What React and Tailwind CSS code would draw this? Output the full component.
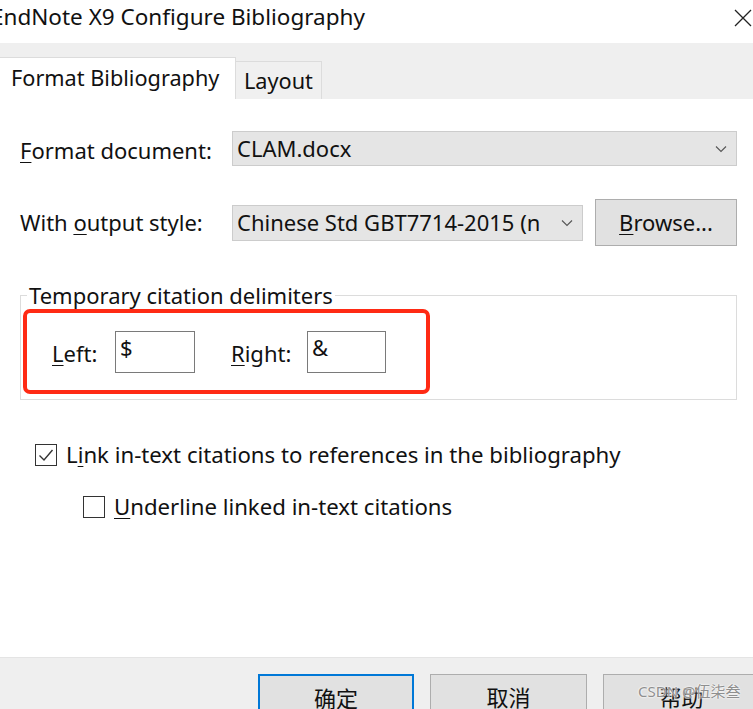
import React from 'react';

// mnemonic letter, underlined like a Windows access key
const Key = ({ children }) => <span className="underline underline-offset-[3px] decoration-1">{children}</span>;

const Chevron = () => (
  <svg width="12" height="8" viewBox="0 0 12 8" className="shrink-0">
    <polyline points="1,1.5 6,6.5 11,1.5" fill="none" stroke="#555" strokeWidth="1.1" />
  </svg>
);

const Checkbox = ({ checked }) => (
  <span className="w-[22px] h-[22px] border-[1.5px] border-[#333] bg-white flex items-center justify-center shrink-0">
    {checked && (
      <svg width="16" height="14" viewBox="0 0 16 14">
        <polyline points="1.5,7.5 6,12 14.5,2" fill="none" stroke="#333" strokeWidth="1.4" />
      </svg>
    )}
  </span>
);

const DialogButton = ({ label, primary }) => (
  <button
    className={`w-full h-[44px] flex items-start justify-center pt-[8px] text-[22px] leading-[28px] bg-[#e1e1e1] ${
      primary ? 'border-2 border-[#0078d7]' : 'border border-[#adadad]'
    }`}
  >
    {label}
  </button>
);

export default function App() {
  return (
    <div
      className="w-[753px] h-[709px] overflow-hidden relative bg-white text-[#111] flex flex-col"
      style={{ fontFamily: '"Noto Sans", "Noto Sans CJK SC", sans-serif' }}
    >
      {/* title bar */}
      <div className="h-[43px] shrink-0 flex items-start justify-between pt-[3px]">
        <span className="ml-[-9px] text-[22.5px] leading-[28px]">EndNote X9 Configure Bibliography</span>
        <svg width="18" height="18" viewBox="0 0 18 18" className="mr-[1px] mt-[6px]">
          <path d="M1 1L17 17M17 1L1 17" stroke="#222" strokeWidth="1.3" />
        </svg>
      </div>

      {/* tab strip */}
      <div className="h-[56px] shrink-0 bg-[#efefef] flex items-end">
        <div className="w-[236px] h-[42px] bg-white border-t border-r border-[#dcdcdc] pl-[11px] text-[21.7px] leading-[40px] whitespace-nowrap">
          Format Bibliography
        </div>
        <div className="w-[86px] h-[38px] bg-[#f0f0f0] border-t border-r border-[#dcdcdc] pl-[8px] text-[21.7px] leading-[38px]">
          Layout
        </div>
      </div>

      {/* page body */}
      <div className="flex-1 bg-white pl-[20px] pr-[16px] pt-[32px] text-[22px] flex flex-col">
        <div className="flex items-center h-[35px]">
          <span className="w-[212px] mt-[4px]">
            <Key>F</Key>ormat document:
          </span>
          <div className="flex-1 h-[35px] bg-[#e5e5e5] border border-[#cccccc] flex items-center justify-between pl-[4px] pr-[9px]">
            <span>CLAM.docx</span>
            <Chevron />
          </div>
        </div>

        <div className="flex items-center h-[47px] mt-[33px]">
          <span className="w-[212px]">
            With <Key>o</Key>utput style:
          </span>
          <div className="w-[351px] h-[36px] bg-[#e5e5e5] border border-[#cccccc] flex items-center pl-[4px] pr-[9px] gap-[6px]">
            <span className="flex-1 min-w-0 whitespace-nowrap overflow-hidden">Chinese Std GBT7714-2015 (n</span>
            <Chevron />
          </div>
          <button className="ml-[12px] flex-1 h-[47px] bg-[#e1e1e1] border border-[#adadad] text-[22px]">
            <Key>B</Key>rowse...
          </button>
        </div>

        <fieldset className="mt-[36px] border border-[#dcdcdc] px-[2px] pb-[5px]">
          <legend className="ml-[4px] px-[2px] text-[22px] leading-[27px]">Temporary citation delimiters</legend>
          <div className="w-[407px] h-[85px] border-[4px] border-[#ff2a14] rounded-[7px] flex items-center pl-[25px]">
            <span className="w-[63px] mt-[3px]">
              <Key>L</Key>eft:
            </span>
            <div className="w-[80px] h-[42px] border border-[#7a7a7a] px-[4px] leading-[30px]">$</div>
            <span className="ml-[36px] w-[76px] mt-[3px]">
              <Key>R</Key>ight:
            </span>
            <div className="w-[79px] h-[42px] border border-[#7a7a7a] px-[4px] leading-[30px]">&amp;</div>
          </div>
        </fieldset>

        <label className="mt-[43px] ml-[15px] flex items-center gap-[9px] h-[24px] text-[22.2px]">
          <Checkbox checked />
          <span>
            L<Key>i</Key>nk in-text citations to references in the bibliography
          </span>
        </label>
        <label className="mt-[28px] ml-[63px] flex items-center gap-[9px] h-[24px] text-[22.2px]">
          <Checkbox />
          <span>
            <Key>U</Key>nderline linked in-text citations
          </span>
        </label>
      </div>

      {/* button bar */}
      <div className="h-[52px] shrink-0 bg-[#efefef] border-t border-[#e4e4e4] pt-[16px] pl-[258px] flex gap-[16px]">
        <div className="w-[156px] shrink-0">
          <DialogButton label="确定" primary />
        </div>
        <div className="w-[157px] shrink-0">
          <DialogButton label="取消" />
        </div>
        <div className="w-[157px] shrink-0">
          <DialogButton label="帮助" />
        </div>
      </div>

      <span className="absolute left-[638px] top-[680px] text-[15px] text-[#8f8f8f] whitespace-nowrap [text-shadow:0_0_2px_#fff,0_0_2px_#fff]">
        CSDN @伍柒叁
      </span>
    </div>
  );
}
